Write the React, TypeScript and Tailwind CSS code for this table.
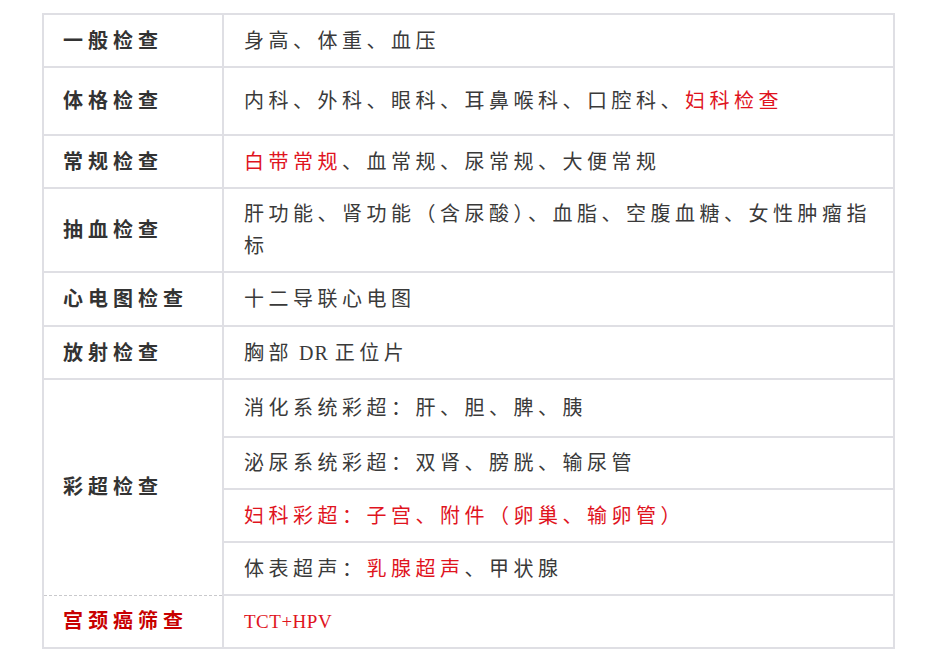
const RED = "text-[#e0141e]";

type Seg = { t: string; red?: boolean };

function Line({ segs }: { segs: Seg[] }) {
  return (
    <>
      {segs.map((s, i) => (
        <span key={i} className={s.red ? RED : undefined}>
          {s.t}
        </span>
      ))}
    </>
  );
}

const cell = "border-2 border-[#dfdfe4] align-middle";
const label = `${cell} pl-[19px] pr-2 text-[20px] font-bold tracking-[5px] text-[#333]`;
const content = `${cell} pl-[20px] pr-[10px] text-[20px] tracking-[4.5px] text-[#3a3a3a] leading-[32px]`;

export default function App() {
  return (
    <div className="min-h-screen bg-white pt-[13px] font-['Liberation_Serif','Noto_Sans_CJK_SC',sans-serif]">
      <table className="mx-auto w-[853px] border-collapse border-2 border-[#dfdfe4]">
        <colgroup>
          <col className="w-[180px]" />
          <col />
        </colgroup>
        <tbody>
          <tr className="h-[53px]">
            <td className={label}>一般检查</td>
            <td className={content}>身高、体重、血压</td>
          </tr>
          <tr className="h-[68px]">
            <td className={label}>体格检查</td>
            <td className={content}>
              <Line segs={[{ t: "内科、外科、眼科、耳鼻喉科、口腔科、" }, { t: "妇科检查", red: true }]} />
            </td>
          </tr>
          <tr className="h-[53px]">
            <td className={label}>常规检查</td>
            <td className={content}>
              <Line segs={[{ t: "白带常规", red: true }, { t: "、血常规、尿常规、大便常规" }]} />
            </td>
          </tr>
          <tr className="h-[84px]">
            <td className={label}>抽血检查</td>
            <td className={content}>肝功能、肾功能（含尿酸）、血脂、空腹血糖、女性肿瘤指标</td>
          </tr>
          <tr className="h-[54px]">
            <td className={label}>心电图检查</td>
            <td className={content}>十二导联心电图</td>
          </tr>
          <tr className="h-[53px]">
            <td className={label}>放射检查</td>
            <td className={content}>
              胸部<span className="tracking-[1px]"> DR </span>正位片
            </td>
          </tr>
          <tr className="h-[58px]">
            <td
              rowSpan={4}
              className={`${label} border-b-[1px] border-b-[#c9c9cc] [border-bottom-style:dashed]`}
            >
              彩超检查
            </td>
            <td className={content}>消化系统彩超：肝、胆、脾、胰</td>
          </tr>
          <tr className="h-[52px]">
            <td className={content}>泌尿系统彩超：双肾、膀胱、输尿管</td>
          </tr>
          <tr className="h-[53px]">
            <td className={`${content} ${RED}`}>妇科彩超：子宫、附件（卵巢、输卵管）</td>
          </tr>
          <tr className="h-[53px]">
            <td className={content}>
              <Line segs={[{ t: "体表超声：" }, { t: "乳腺超声", red: true }, { t: "、甲状腺" }]} />
            </td>
          </tr>
          <tr className="h-[53px]">
            <td
              className={`${label} text-[#c80000] border-t-[1px] border-t-[#c9c9cc] [border-top-style:dashed]`}
            >
              宫颈癌筛查
            </td>
            <td className={content}>
              <span className={`${RED} text-[19px] tracking-[0.5px]`}>TCT+HPV</span>
            </td>
          </tr>
        </tbody>
      </table>
    </div>
  );
}
